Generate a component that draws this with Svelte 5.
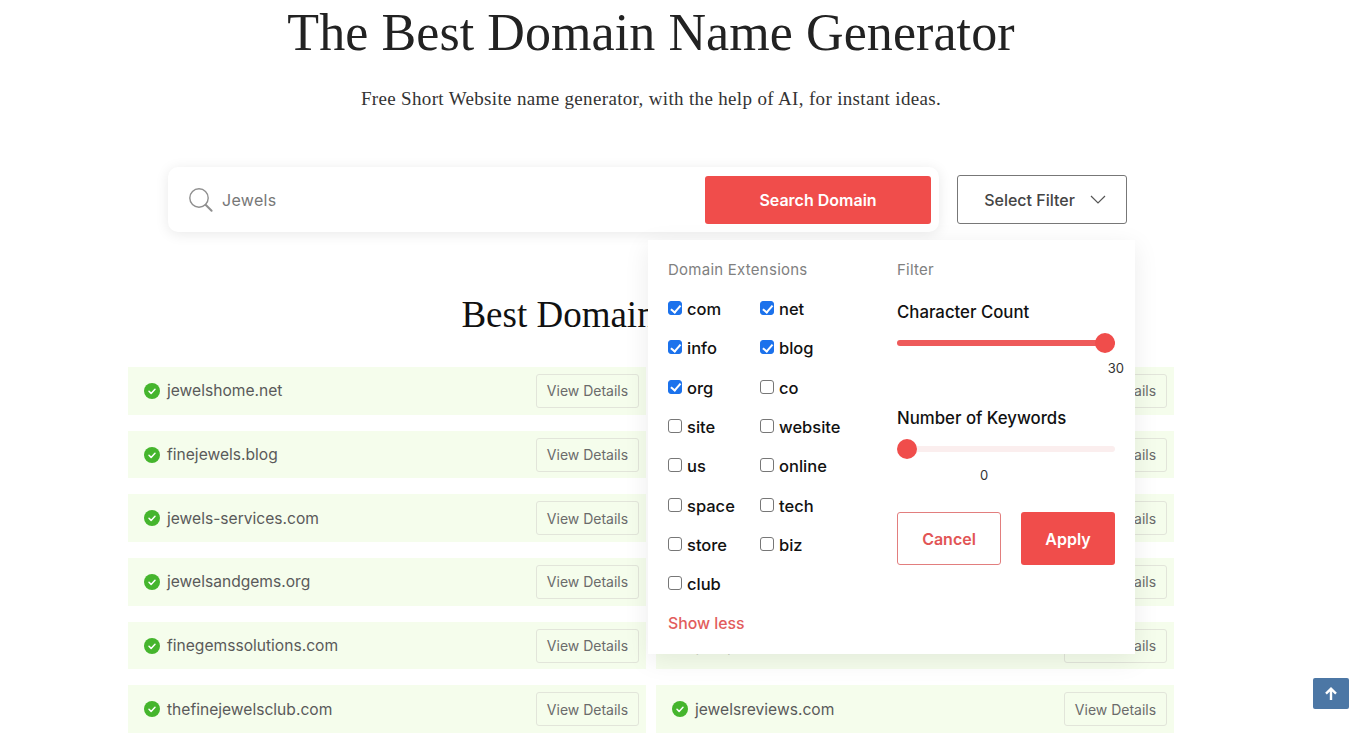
<script>
	const left = ["jewelshome.net", "finejewels.blog", "jewels-services.com", "jewelsandgems.org", "finegemssolutions.com", "thefinejewelsclub.com"];
	const right = ["jewelsonline.com", "jewelsworld.net", "jewelshop.info", "gemsandjewels.com", "yourjewels.com", "jewelsreviews.com"];

	let extensions = [
		["com", true], ["net", true],
		["info", true], ["blog", true],
		["org", true], ["co", false],
		["site", false], ["website", false],
		["us", false], ["online", false],
		["space", false], ["tech", false],
		["store", false], ["biz", false],
		["club", false]
	];
</script>

{#snippet row(name)}
	<div class="row">
		<span class="tick">
			<svg viewBox="0 0 16 16" width="16" height="16" aria-hidden="true">
				<circle cx="8" cy="8" r="8" fill="#45b52d" />
				<path d="M5 8.3l2.1 2.1L11 6.3" fill="none" stroke="#fff" stroke-width="1.5" stroke-linecap="round" stroke-linejoin="round" />
			</svg>
		</span>
		<span class="name">{name}</span>
		<button class="details">View Details</button>
	</div>
{/snippet}

<main class="page">
	<h1>The Best Domain Name Generator</h1>
	<p class="sub">Free Short Website name generator, with the help of AI, for instant ideas.</p>

	<div class="search-row">
		<div class="search">
			<svg class="glass" viewBox="0 0 26 26" width="26" height="26" aria-hidden="true">
				<circle cx="11" cy="11" r="9.2" fill="none" stroke="#8f8f8f" stroke-width="1.4" />
				<path d="M17.6 17.8l6 6" fill="none" stroke="#8f8f8f" stroke-width="2" stroke-linecap="round" />
			</svg>
			<span class="query">Jewels</span>
			<button class="go">Search Domain</button>
		</div>
		<div class="filter-wrap">
			<button class="select">
				Select Filter
				<svg viewBox="0 0 16 9" width="16" height="9" aria-hidden="true">
					<path d="M1 1l7 7 7-7" fill="none" stroke="#555" stroke-width="1.2" />
				</svg>
			</button>

			<div class="popover">
				<div class="ext">
					<div class="label">Domain Extensions</div>
					<div class="checks">
						{#each extensions as [name, on]}
							<label class="check"><input type="checkbox" checked={on} />{name}</label>
						{/each}
					</div>
					<div class="less">Show less</div>
				</div>
				<div class="filters">
					<div class="label">Filter</div>
					<div class="slider-title first">Character Count</div>
					<div class="track full"><span class="thumb end"></span></div>
					<div class="value right">30</div>
					<div class="slider-title second">Number of Keywords</div>
					<div class="track"><span class="thumb"></span></div>
					<div class="value center">0</div>
					<div class="actions">
						<button class="cancel">Cancel</button>
						<button class="apply">Apply</button>
					</div>
				</div>
			</div>
		</div>
	</div>

	<h2>Best Domain Name Ideas</h2>

	<div class="results">
		{#each left as name, i}
			{@render row(name)}
			{@render row(right[i])}
		{/each}
	</div>
</main>

<button class="top" aria-label="Back to top">
	<svg viewBox="0 0 16 16" width="16" height="16" aria-hidden="true">
		<path d="M8 14V3M3 7.6L8 2.6l5 5" fill="none" stroke="#fff" stroke-width="2.4" />
	</svg>
</button>

<style>
	:global(body) {
		margin: 0;
		background: #fff;
		font-family: Inter, "Liberation Sans", sans-serif;
		overflow: hidden;
	}

	.page {
		width: 1046px;
		margin-left: 128px;
		height: 734px;
	}

	h1 {
		margin: 0;
		padding-top: 5px;
		font: 400 52px/56px "Liberation Serif", serif;
		color: #222;
		text-align: center;
		letter-spacing: 0.08px;
	}

	.sub {
		margin: 26px 0 0;
		font: 400 19px/24px "Liberation Serif", serif;
		color: #333;
		text-align: center;
		letter-spacing: 0.34px;
	}

	.search-row {
		display: flex;
		align-items: center;
		gap: 18px;
		margin: 56px 0 0 40px;
	}

	.search {
		width: 771px;
		height: 65px;
		box-sizing: border-box;
		display: flex;
		align-items: center;
		padding: 0 8px 0 20px;
		background: #fff;
		border-radius: 10px;
		box-shadow: 0 2px 14px rgba(0, 0, 0, 0.09);
	}

	.query {
		margin-left: 8px;
		font-size: 16px;
		color: #777;
		letter-spacing: 0.3px;
	}

	.go {
		margin-left: auto;
		width: 226px;
		height: 48px;
		border: 0;
		border-radius: 3px;
		background: #f04d4b;
		color: #fff;
		font: 600 16px Inter, sans-serif;
	}

	.filter-wrap {
		position: relative;
	}

	.select {
		width: 170px;
		height: 49px;
		display: flex;
		align-items: center;
		justify-content: center;
		gap: 15px;
		background: #fff;
		border: 1px solid #777;
		border-radius: 3px;
		color: #444;
		font: 500 16px Inter, sans-serif;
		padding: 0 0 0 6px;
	}

	.popover {
		position: absolute;
		z-index: 2;
		top: 65px;
		right: -8px;
		width: 487px;
		height: 414px;
		box-sizing: border-box;
		display: flex;
		padding: 20px 20px 0;
		background: #fff;
		box-shadow: 0 6px 24px rgba(0, 0, 0, 0.08);
	}

	.ext {
		width: 229px;
	}

	.filters {
		width: 218px;
	}

	.label {
		font-size: 15px;
		line-height: 20px;
		color: #808080;
		letter-spacing: 0.25px;
	}

	.checks {
		display: grid;
		grid-template-columns: 92px 1fr;
		grid-auto-rows: 39.3px;
		margin-top: 9.5px;
	}

	.check {
		display: flex;
		align-items: center;
		gap: 5px;
		font-size: 16.5px;
		font-weight: 500;
		color: #111;
	}

	.check input {
		appearance: none;
		position: relative;
		width: 14px;
		height: 14px;
		margin: -2px 0 0;
		box-sizing: border-box;
		background: #fff;
		border: 1px solid #777;
		border-radius: 3px;
	}

	.check input:checked {
		background: #1c72ec;
		border-color: #1c72ec;
	}

	.check input:checked::after {
		content: "";
		position: absolute;
		left: 3.5px;
		top: 0.5px;
		width: 3.5px;
		height: 7.5px;
		border: solid #fff;
		border-width: 0 2px 2px 0;
		transform: rotate(40deg);
	}

	.less {
		margin-top: 10px;
		font-size: 15.8px;
		font-weight: 500;
		line-height: 20px;
		color: #e25c5c;
	}

	.slider-title {
		font-size: 16.8px;
		font-weight: 500;
		line-height: 20px;
		color: #111;
	}

	.slider-title.first {
		margin-top: 22px;
	}

	.slider-title.second {
		margin-top: 32px;
	}

	.track {
		position: relative;
		height: 6px;
		margin-top: 18px;
		border-radius: 3px;
		background: #fbeeee;
	}

	.track.full {
		background: #ee5a5a;
	}

	.thumb {
		position: absolute;
		left: 0;
		top: -7px;
		width: 20px;
		height: 20px;
		border-radius: 50%;
		background: #f04d4b;
	}

	.thumb.end {
		left: auto;
		right: 0;
	}

	.value {
		font-size: 13px;
		line-height: 16px;
		color: #333;
	}

	.value.right {
		margin-top: 14px;
		margin-right: -9px;
		text-align: right;
	}

	.value.center {
		margin-top: 15px;
		padding-left: 83px;
	}

	.actions {
		display: flex;
		justify-content: space-between;
		margin-top: 29px;
	}

	.actions button {
		height: 53px;
		border-radius: 3px;
		font: 600 16px Inter, sans-serif;
	}

	.cancel {
		width: 104px;
		background: #fff;
		border: 1px solid #e27e7e;
		color: #e25555;
	}

	.apply {
		width: 94px;
		background: #f04d4b;
		border: 0;
		color: #fff;
	}

	h2 {
		margin: 59px 0 0;
		font: 400 37px/48px "Liberation Serif", serif;
		color: #111;
		text-align: center;
	}

	.results {
		display: grid;
		grid-template-columns: 518px 518px;
		grid-auto-rows: 47.7px;
		justify-content: space-between;
		row-gap: 16px;
		margin-top: 28px;
	}

	.row {
		display: flex;
		align-items: center;
		padding: 0 7px 0 16px;
		background: #f5fdec;
	}

	.tick {
		display: flex;
		margin-right: 7px;
	}

	.name {
		font-size: 15.6px;
		color: #5a5a5a;
	}

	.details {
		margin-left: auto;
		width: 103px;
		height: 34px;
		background: transparent;
		border: 1px solid #e2e5da;
		border-radius: 3px;
		color: #6b6b6b;
		font: 400 14px Inter, sans-serif;
		padding: 0;
	}

	.top {
		position: fixed;
		right: 12px;
		bottom: 25px;
		width: 36px;
		height: 31px;
		display: flex;
		align-items: center;
		justify-content: center;
		padding: 0;
		border: 0;
		border-radius: 2px;
		background: #4c77a5;
	}
</style>
